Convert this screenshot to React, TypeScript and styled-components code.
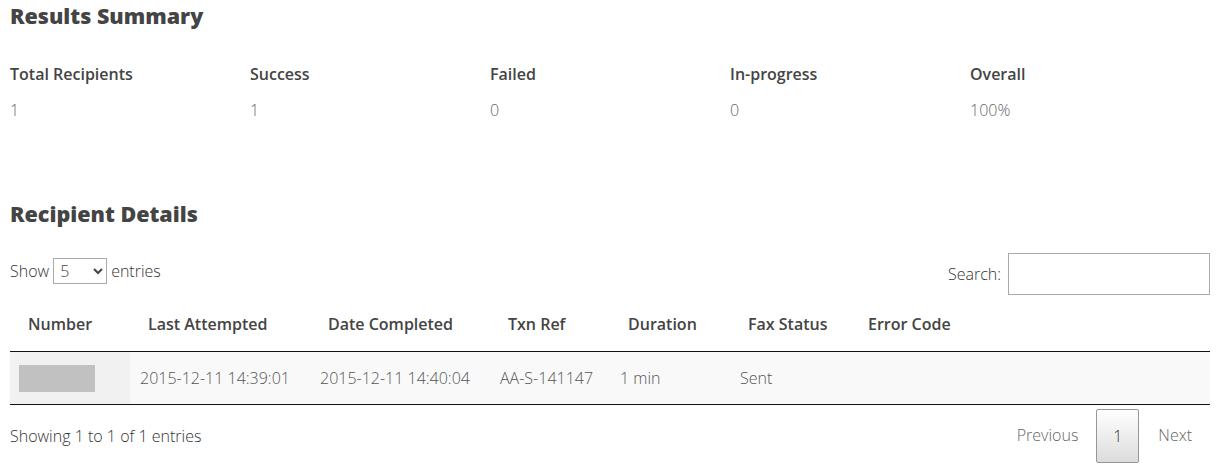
import React from 'react'
import styled, { createGlobalStyle } from 'styled-components'

const GlobalStyle = createGlobalStyle`
  body {
    margin: 0;
    background: #fff;
    font-family: 'Open Sans', 'Liberation Sans', sans-serif;
    font-size: 16px;
    font-weight: 300;
    color: #555;
  }
`

type Summary = { label: string; value: string }

const summary: Summary[] = [
  { label: 'Total Recipients', value: '1' },
  { label: 'Success', value: '1' },
  { label: 'Failed', value: '0' },
  { label: 'In-progress', value: '0' },
  { label: 'Overall', value: '100%' },
]

const columns = [
  { title: 'Number', width: 120 },
  { title: 'Last Attempted', width: 180 },
  { title: 'Date Completed', width: 180 },
  { title: 'Txn Ref', width: 120 },
  { title: 'Duration', width: 120 },
  { title: 'Fax Status', width: 120 },
  { title: 'Error Code', width: undefined },
]

function App() {
  return (
    <Page>
      <GlobalStyle />
      <Heading>Results Summary</Heading>
      <SummaryGrid>
        {summary.map((s) => (
          <SummaryCol key={s.label}>
            <SummaryLabel>{s.label}</SummaryLabel>
            <SummaryValue>{s.value}</SummaryValue>
          </SummaryCol>
        ))}
      </SummaryGrid>

      <Heading>Recipient Details</Heading>
      <Toolbar>
        <Length>
          Show
          <Select defaultValue='5'>
            <option value='5'>5</option>
            <option value='10'>10</option>
            <option value='25'>25</option>
          </Select>
          entries
        </Length>
        <SearchBox>
          Search:
          <SearchInput type='text' />
        </SearchBox>
      </Toolbar>

      <Table>
        <thead>
          <tr>
            {columns.map((c) => (
              <Th key={c.title} style={c.width ? { width: c.width } : undefined}>
                {c.title}
              </Th>
            ))}
          </tr>
        </thead>
        <tbody>
          <Row>
            <Td sorted>
              <Masked />
            </Td>
            <Td>2015-12-11 14:39:01</Td>
            <Td>2015-12-11 14:40:04</Td>
            <Td>AA-S-141147</Td>
            <Td>1 min</Td>
            <Td>Sent</Td>
            <Td></Td>
          </Row>
        </tbody>
      </Table>

      <Footer>
        <Info>
          Showing <Num>1</Num> to <Num>1</Num> of <Num>1</Num> entries
        </Info>
        <Paging>
          <PageLink>Previous</PageLink>
          <PageButton>1</PageButton>
          <PageLink>Next</PageLink>
        </Paging>
      </Footer>
    </Page>
  )
}

export default App

const Page = styled.div`
  padding: 0 6px 0 10px;
`

const Heading = styled.h2`
  margin: 0;
  height: 34px;
  line-height: 32px;
  font-size: 21.5px;
  font-weight: 800;
  color: #444;
`

const SummaryGrid = styled.div`
  display: grid;
  grid-template-columns: repeat(5, 240px);
  padding-top: 23px;
  height: 140px;
  box-sizing: border-box;
  margin-bottom: 24px;
`

const SummaryCol = styled.div`
  display: flex;
  flex-direction: column;
`

const SummaryLabel = styled.div`
  height: 34px;
  line-height: 34px;
  font-weight: 600;
  color: #444;
`

const SummaryValue = styled.div`
  height: 38px;
  line-height: 38px;
  color: #666;
`

const Toolbar = styled.div`
  display: flex;
  justify-content: space-between;
  align-items: flex-start;
  height: 65px;
  padding-top: 21px;
  box-sizing: border-box;
`

const Length = styled.label`
  display: flex;
  align-items: center;
  gap: 4px;
  margin-top: 5px;
  height: 26px;
  color: #333;
`

const Select = styled.select`
  width: 54px;
  height: 26px;
  border: 1px solid #aaa;
  border-radius: 0;
  background: #fff;
  font-family: inherit;
  font-size: 16px;
  font-weight: 300;
  color: #444;
  padding: 0 2px;
`

const SearchBox = styled.label`
  display: flex;
  align-items: center;
  gap: 7px;
  color: #333;
`

const SearchInput = styled.input`
  width: 202px;
  height: 42px;
  box-sizing: border-box;
  border: 1px solid #aaa;
  border-radius: 0;
  margin: 0;
`

const Table = styled.table`
  width: 1200px;
  border-collapse: collapse;
  border-spacing: 0;
  table-layout: fixed;
`

const Th = styled.th`
  text-align: left;
  height: 54px;
  padding: 0 10px 0 18px;
  font-weight: 600;
  color: #444;
  border-bottom: 1px solid #111;
  box-sizing: border-box;
  white-space: nowrap;
`

const Row = styled.tr`
  background: #f9f9f9;
`

const Td = styled.td<{ sorted?: boolean }>`
  height: 53px;
  padding: 1px 10px 0;
  color: #555;
  white-space: nowrap;
  background: ${(props) => (props.sorted ? '#f1f1f1' : 'transparent')};
  border-bottom: 1px solid #111;
  box-sizing: border-box;
  vertical-align: middle;
`

const Masked = styled.div`
  width: 76px;
  height: 27px;
  margin-left: -1px;
  background: #c1c1c1;
`

const Footer = styled.div`
  display: flex;
  justify-content: space-between;
  align-items: flex-start;
  width: 1200px;
  padding-top: 4px;
`

const Info = styled.div`
  padding-top: 16px;
  color: #333;
`

const Num = styled.span`
  color: #333;
`

const Paging = styled.div`
  display: flex;
  align-items: center;
`

const PageLink = styled.a`
  display: inline-block;
  padding: 0 18px 0 19px;
  color: #666;
  line-height: 53px;
  cursor: default;
`

const PageButton = styled.a`
  display: inline-block;
  width: 43px;
  height: 54px;
  box-sizing: border-box;
  line-height: 52px;
  text-align: center;
  color: #333;
  border: 1px solid #979797;
  border-radius: 2px;
  background: linear-gradient(to bottom, #fff 0%, #dcdcdc 100%);
`
